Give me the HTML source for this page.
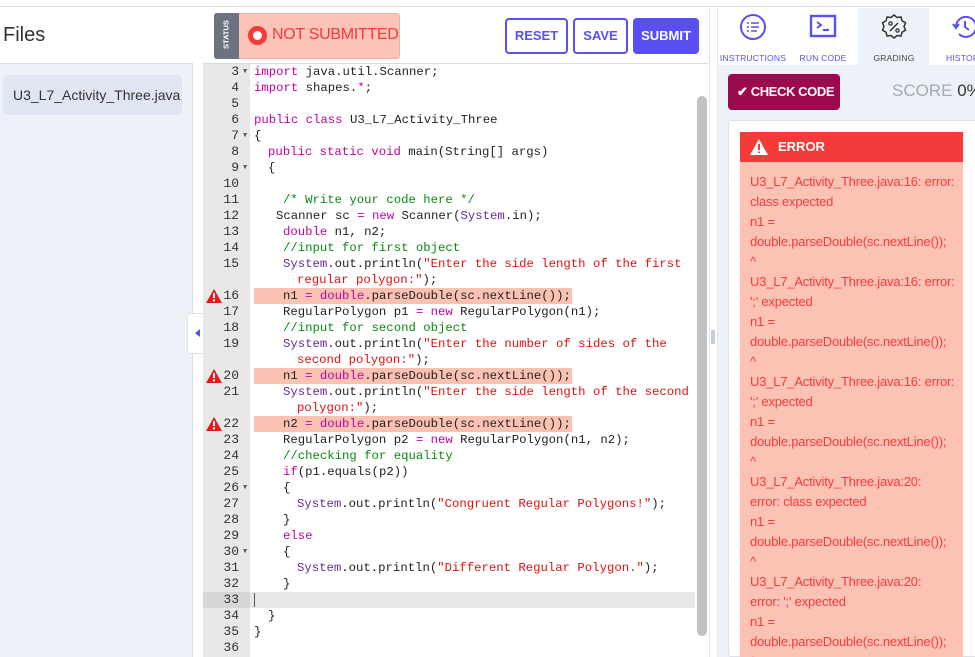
<!DOCTYPE html>
<html><head><meta charset="utf-8"><style>
*{margin:0;padding:0;box-sizing:border-box}
body{width:975px;height:657px;overflow:hidden;background:#fff;font-family:"Liberation Sans",sans-serif;position:relative}
.abs{position:absolute}
#top{left:0;top:0;width:975px;height:7px;background:#fff;border-bottom:1px solid #dde1e8}
#files{left:0;top:8px;width:193px;height:649px;background:#eef2f8;border-right:1px solid #d6dbe3}
#fh{left:0;top:8px;width:193px;height:56px;background:#fff;border-bottom:1px solid #d6dbe3;font-size:20px;color:#333;padding:16px 0 0 3px}
#fi{left:3px;top:75px;width:179px;height:40px;background:#dfe6f2;border-radius:5px;font-size:14px;color:#333;padding:12px 0 0 10px;white-space:nowrap}
#ehead{left:203px;top:8px;width:505px;height:56px;background:#fff}
#code{left:203px;top:64px;width:505px;height:593px;background:#fff;font-family:"Liberation Mono",monospace;font-size:12.3px;color:#222;overflow:hidden}
#gut{left:0;top:0;width:47px;height:593px;background:#e8e8e8}
.row{position:absolute;left:0;height:16px;line-height:16px;width:492px;white-space:pre;overflow:hidden}
.ln{position:absolute;left:0;width:36px;text-align:right;color:#333;font-size:13px}
.fold{position:absolute;left:40px;font-size:7px;color:#555}
.tx{position:absolute}
.k{color:#c300a8}.s{color:#e01010}.c{color:#0a8a10}.p{color:#6a2aa0}
.err{position:absolute;left:51px;width:318px;height:16px;background:#fbc1b1}
.warn{position:absolute;left:3px;top:1px}
#sb{left:697px;top:96px;width:10px;height:540px;background:#c1c1c1;border-radius:5px}
#div{left:709px;top:8px;width:9px;height:649px;background:#fff;border-left:1px solid #e3e6ea;border-right:1px solid #e3e6ea}
#right{left:718px;top:8px;width:257px;height:649px;background:#edf1f8}
.tab{position:absolute;top:8px;height:57px;width:70px;background:#fff;text-align:center;font-size:8.5px;color:#5a4ff0;letter-spacing:.2px;white-space:nowrap}
.tab span{position:absolute;left:0;right:0;top:45px}
</style></head><body>
<div class="abs" id="top"></div>
<div class="abs" id="files"></div>
<div class="abs" id="fh">Files</div>
<div class="abs" id="fi">U3_L7_Activity_Three.java</div>
<div class="abs" style="left:187px;top:313px;width:22px;height:41px;background:#fff;border:1px solid #dde1e8;border-radius:3px"><div style="position:absolute;left:7px;top:15px;width:0;height:0;border-top:4px solid transparent;border-bottom:4px solid transparent;border-right:5px solid #5a4ff0"></div></div>

<div class="abs" id="ehead">
 <div class="abs" style="left:11px;top:5px;width:186px;height:46px;background:#fcc3b6;border-radius:3px;border:1px solid #f0b0a5"></div>
 <div class="abs" style="left:11px;top:5px;width:25px;height:46px;background:#6b7280;border-radius:3px 0 0 3px"><div style="position:absolute;left:-8px;top:17px;transform:rotate(-90deg);color:#fff;font-size:7.5px;font-weight:bold;width:40px;text-align:center">STATUS</div></div>
 <div class="abs" style="left:45px;top:18px;width:19px;height:19px;border-radius:50%;border:5px solid #f33a3a;background:#fff"></div>
 <div class="abs" style="left:69px;top:18px;font-size:16px;color:#f33a3a;white-space:nowrap;letter-spacing:-.3px">NOT SUBMITTED</div>
 <div class="abs" style="left:302px;top:10px;width:63px;height:36px;border:2px solid #5a4ff0;border-radius:4px;color:#5a4ff0;font-size:13px;text-align:center;line-height:32px;font-weight:bold">RESET</div>
 <div class="abs" style="left:370px;top:10px;width:55px;height:36px;border:2px solid #5a4ff0;border-radius:4px;color:#5a4ff0;font-size:13px;text-align:center;line-height:32px;font-weight:bold">SAVE</div>
 <div class="abs" style="left:430px;top:10px;width:66px;height:36px;background:#5a4ff0;border-radius:4px;color:#fff;font-size:13px;text-align:center;line-height:36px;font-weight:bold">SUBMIT</div>
 <div class="abs" style="left:0;top:55px;width:505px;height:1px;background:#d6dbe3"></div>
</div>

<div class="abs" id="code">
<div class="abs" id="gut"></div>
<div class="abs" style="left:0;top:528px;width:47px;height:16px;background:#d6d6d6"></div>
<div class="abs" style="left:47px;top:528px;width:445px;height:16px;background:#e8e8e8"></div>
<div class="abs" style="left:51px;top:529px;width:1px;height:14px;background:#555"></div>
<div id="rows"></div>
</div>
<div class="abs" id="sb"></div>
<div class="abs" id="div"><div style="position:absolute;left:1px;top:322px;width:4px;height:14px;background:#c8ccd4"></div></div>

<div class="abs" id="right"></div>
<div class="tab" style="left:718px"><svg width="30" height="30" viewBox="0 0 30 30" style="margin-top:4px"><circle cx="15" cy="15" r="12" fill="none" stroke="#5a4ff0" stroke-width="2"/><path d="M9 11h2M13 11h8M9 15h2M13 15h8M9 19h2M13 19h6" stroke="#5a4ff0" stroke-width="1.6"/></svg><span>INSTRUCTIONS</span></div>
<div class="tab" style="left:788px"><svg width="30" height="30" viewBox="0 0 30 30" style="margin-top:3px"><rect x="3" y="5" width="24" height="20" fill="none" stroke="#5a4ff0" stroke-width="2.4"/><path d="M9 11l4 3-4 3M15 19h6" fill="none" stroke="#5a4ff0" stroke-width="2"/></svg><span>RUN CODE</span></div>
<div class="tab" style="left:859px;background:#edf1f8;color:#444"><svg width="30" height="30" viewBox="0 0 30 30" style="margin-top:4px"><path d="M15 3l3 2.5 4-.5 1 3.8 3.5 2-1.5 3.7 1.5 3.7-3.5 2-1 3.8-4-.5-3 2.5-3-2.5-4 .5-1-3.8-3.5-2 1.5-3.7-1.5-3.7 3.5-2 1-3.8 4 .5z" fill="none" stroke="#333" stroke-width="1.5"/><path d="M11 19l8-8" stroke="#333" stroke-width="1.5"/><circle cx="11.5" cy="11.5" r="1.6" fill="none" stroke="#333" stroke-width="1.3"/><circle cx="18.5" cy="18.5" r="1.6" fill="none" stroke="#333" stroke-width="1.3"/></svg><span>GRADING</span></div>
<div class="tab" style="left:929px;width:50px;text-align:left"><svg width="30" height="30" viewBox="0 0 30 30" style="margin:4px 0 0 21px"><path d="M6 15a10 10 0 1 1 3 7" fill="none" stroke="#5a4ff0" stroke-width="2"/><path d="M3 12l3 4 3-4" fill="none" stroke="#5a4ff0" stroke-width="2"/><path d="M15 9v6l4 3" fill="none" stroke="#5a4ff0" stroke-width="2"/></svg><span style="left:17px">HISTORY</span></div>

<div class="abs" style="left:728px;top:74px;width:112px;height:36px;background:#9b0a4f;border-radius:4px;color:#fff;font-size:13px;font-weight:bold;line-height:36px;padding-left:9px;white-space:nowrap;letter-spacing:-.4px">✔ CHECK CODE</div>
<div class="abs" style="left:892px;top:81px;font-size:17px;color:#a0aab8;white-space:nowrap">SCORE <span style="color:#333">0%</span></div>
<div class="abs" style="left:728px;top:120px;width:250px;height:537px;background:#fff;border:1px solid #dde1e8;border-radius:3px"></div>
<div class="abs" style="left:740px;top:132px;width:223px;height:30px;background:#f53a3a;color:#fff;font-size:13px;font-weight:bold;line-height:30px;padding-left:38px">ERROR
 <svg width="18" height="16" viewBox="0 0 18 16" style="position:absolute;left:10px;top:7px"><path d="M9 0L18 16H0z" fill="#fff"/><path d="M9 5v6M9 12.5v1.5" stroke="#f53a3a" stroke-width="2"/></svg></div>
<div class="abs" style="left:740px;top:162px;width:223px;height:495px;background:#fcc3b5;color:#f53a3a;font-size:13px;line-height:20px;padding:10px 0 0 10px;letter-spacing:-.2px;overflow:hidden">
U3_L7_Activity_Three.java:16: error:<br>class expected<br>n1 =<br>double.parseDouble(sc.nextLine());<br>^<br>
U3_L7_Activity_Three.java:16: error:<br>';' expected<br>n1 =<br>double.parseDouble(sc.nextLine());<br>^<br>
U3_L7_Activity_Three.java:16: error:<br>';' expected<br>n1 =<br>double.parseDouble(sc.nextLine());<br>^<br>
U3_L7_Activity_Three.java:20:<br>error: class expected<br>n1 =<br>double.parseDouble(sc.nextLine());<br>^<br>
U3_L7_Activity_Three.java:20:<br>error: ';' expected<br>n1 =<br>double.parseDouble(sc.nextLine());<br>^
</div>

<script>
var L=[
[3,1,0,'<span class="k">import</span> java.util.Scanner;'],
[4,0,0,'<span class="k">import</span> shapes.<span class="k">*</span>;'],
[5,0,0,''],
[6,0,0,'<span class="k">public class</span> U3_L7_Activity_Three'],
[7,1,0,'{'],
[8,0,14,'<span class="k">public static void</span> main(String[] args)'],
[9,1,14,'{'],
[10,0,0,''],
[11,0,29,'<span class="c">/* Write your code here */</span>'],
[12,0,22,'Scanner sc <span class="k">=</span> <span class="k">new</span> Scanner(<span class="p">System</span>.in);'],
[13,0,29,'<span class="k">double</span> n1, n2;'],
[14,0,29,'<span class="c">//input for first object</span>'],
[15,0,29,'<span class="p">System</span>.out.println(<span class="s">"Enter the side length of the first</span>'],
['',0,43,'<span class="s">regular polygon:"</span>);'],
[16,0,29,'n1 <span class="k">=</span> <span class="k">double</span>.parseDouble(sc.nextLine());',1],
[17,0,29,'RegularPolygon p1 <span class="k">=</span> <span class="k">new</span> RegularPolygon(n1);'],
[18,0,29,'<span class="c">//input for second object</span>'],
[19,0,29,'<span class="p">System</span>.out.println(<span class="s">"Enter the number of sides of the</span>'],
['',0,43,'<span class="s">second polygon:"</span>);'],
[20,0,29,'n1 <span class="k">=</span> <span class="k">double</span>.parseDouble(sc.nextLine());',1],
[21,0,29,'<span class="p">System</span>.out.println(<span class="s">"Enter the side length of the second</span>'],
['',0,43,'<span class="s">polygon:"</span>);'],
[22,0,29,'n2 <span class="k">=</span> <span class="k">double</span>.parseDouble(sc.nextLine());',1],
[23,0,29,'RegularPolygon p2 <span class="k">=</span> <span class="k">new</span> RegularPolygon(n1, n2);'],
[24,0,29,'<span class="c">//checking for equality</span>'],
[25,0,29,'<span class="k">if</span>(p1.equals(p2))'],
[26,1,29,'{'],
[27,0,43,'<span class="p">System</span>.out.println(<span class="s">"Congruent Regular Polygons!"</span>);'],
[28,0,29,'}'],
[29,0,29,'<span class="k">else</span>'],
[30,1,29,'{'],
[31,0,43,'<span class="p">System</span>.out.println(<span class="s">"Different Regular Polygon."</span>);'],
[32,0,29,'}'],
[33,0,0,''],
[34,0,14,'}'],
[35,0,0,'}'],
[36,0,0,'']];
var h='';
L.forEach(function(r,i){
 h+='<div class="row" style="top:'+(i*16)+'px">';
 if(r[4]) h+='<div class="err"></div><svg class="warn" width="16" height="14" viewBox="0 0 16 14"><path d="M8 0L16 14H0z" fill="#e21b1b"/><path d="M8 4v5M8 10.5v1.8" stroke="#fff" stroke-width="2"/></svg>';
 h+='<span class="ln">'+r[0]+'</span>';
 if(r[1]) h+='<span class="fold">▼</span>';
 h+='<span class="tx" style="left:'+(51+r[2])+'px">'+r[3]+'</span></div>';
});
document.getElementById('rows').innerHTML=h;
</script>
</body></html>
